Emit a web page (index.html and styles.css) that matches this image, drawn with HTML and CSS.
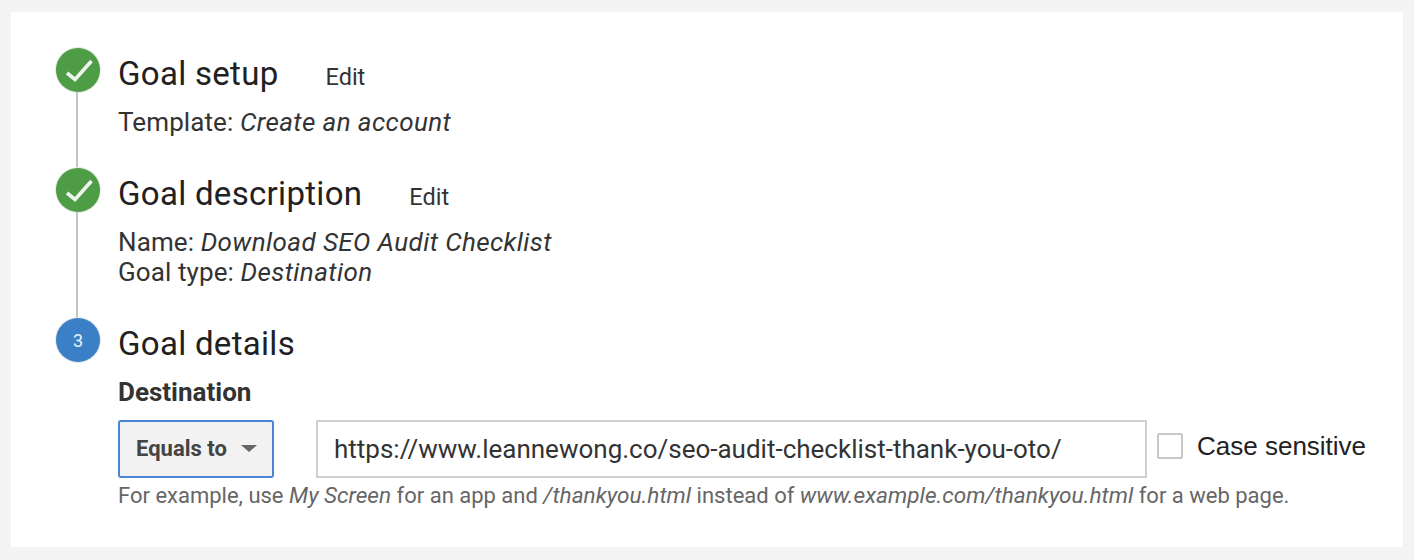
FILE: index.html
```html
<!DOCTYPE html>
<html lang="en">
<head>
<meta charset="utf-8">
<title>Goal details</title>
<link rel="stylesheet" href="styles.css">
</head>
<body>
<main class="card">
  <section class="step step-one">
    <div class="marker">
      <div class="circle done"><svg class="check" viewBox="0 0 44 44"><path d="M11 25l8 6.5L35.5 13" /></svg></div>
      <div class="line"></div>
    </div>
    <div class="content">
      <div class="head"><h2>Goal setup</h2><a class="edit">Edit</a></div>
      <p class="info">Template: <em>Create an account</em></p>
    </div>
  </section>
  <section class="step step-two">
    <div class="marker">
      <div class="circle done"><svg class="check" viewBox="0 0 44 44"><path d="M11 25l8 6.5L35.5 13" /></svg></div>
      <div class="line"></div>
    </div>
    <div class="content">
      <div class="head"><h2>Goal description</h2><a class="edit">Edit</a></div>
      <p class="info">Name: <em>Download SEO Audit Checklist</em></p>
      <p class="info">Goal type: <em>Destination</em></p>
    </div>
  </section>
  <section class="step">
    <div class="marker">
      <div class="circle current">3</div>
    </div>
    <div class="content">
      <div class="head"><h2>Goal details</h2></div>
      <h3>Destination</h3>
      <div class="fields">
        <button class="select">Equals to<span class="caret"></span></button>
        <div class="input">https://www.leannewong.co/seo-audit-checklist-thank-you-oto/</div>
        <span class="checkbox"></span>
        <span class="case">Case sensitive</span>
      </div>
      <p class="hint">For example, use <em>My Screen</em> for an app and <em>/thankyou.html</em> instead of <em>www.example.com/thankyou.html</em> for a web page.</p>
    </div>
  </section>
</main>
</body>
</html>
```
FILE: styles.css
```css
* { box-sizing: border-box; }
html, body { margin: 0; height: 560px; overflow: hidden; }
body {
  background: #f4f4f4;
  padding: 12px 11px 13px;
  font-family: Roboto, "Liberation Sans", sans-serif;
  color: #212121;
}
.card {
  background: #fff;
  height: 535px;
  padding: 36px 0 0 45px;
}
.step { display: flex; }
.step-one { height: 120px; }
.step-two { height: 150px; }
.marker {
  width: 44px;
  margin-right: 18px;
  display: flex;
  flex-direction: column;
  align-items: center;
}
.circle {
  width: 44px;
  height: 44px;
  flex: none;
  border-radius: 50%;
  display: flex;
  align-items: center;
  justify-content: center;
  color: #e8f1fa;
  font-size: 18px;
  box-shadow: 0 0 0 1px #e6e9e6;
}
.done { background: #4e9c45; }
.current { background: #3b80c6; }
.check { width: 44px; height: 44px; }
.check path { fill: none; stroke: #eef5ec; stroke-width: 3.6; }
.line { width: 2px; flex: 1; margin-right: 2px; background: #c4c4c4; }
.content { flex: 1; }
.head { display: flex; align-items: baseline; height: 59px; padding-top: 2px; }
h2 { margin: 0; font-size: 33px; line-height: 48px; font-weight: 400; letter-spacing: .3px; }
.edit { margin-left: 47px; font-size: 23.5px; color: #333; }
.info { margin: 0; font-size: 26px; line-height: 30px; letter-spacing: .1px; color: #333; }
.info em { letter-spacing: .4px; }
h3 { margin: 0; font-size: 26px; line-height: 30px; font-weight: 700; color: #333; }
.fields { display: flex; align-items: center; margin-top: 13px; height: 58px; }
.select {
  width: 156px;
  height: 58px;
  padding: 0 0 2px 16px;
  display: flex;
  align-items: center;
  border: 2px solid #4a86d8;
  border-radius: 3px;
  background: #f2f2f2;
  font: 700 22px Roboto, "Liberation Sans", sans-serif;
  color: #444;
}
.caret {
  margin-left: 14px;
  border-left: 8px solid transparent;
  border-right: 8px solid transparent;
  border-top: 7px solid #666;
}
.input {
  width: 831px;
  height: 58px;
  margin-left: 42px;
  padding-left: 16px;
  border: 2px solid #cfcfcf;
  font-size: 26px;
  line-height: 54px;
  color: #333;
}
.checkbox {
  width: 26px;
  height: 26px;
  margin: -6px 14px 0 10px;
  border: 2px solid #c8c8c8;
  border-radius: 2px;
}
.case { font-family: "Liberation Sans", sans-serif; font-size: 26px; margin-top: -6px; color: #222; }
.hint { margin: 5px 0 0; font-size: 22px; line-height: 26px; color: #666; }
.hint em { font-size: 22.6px; }
```
